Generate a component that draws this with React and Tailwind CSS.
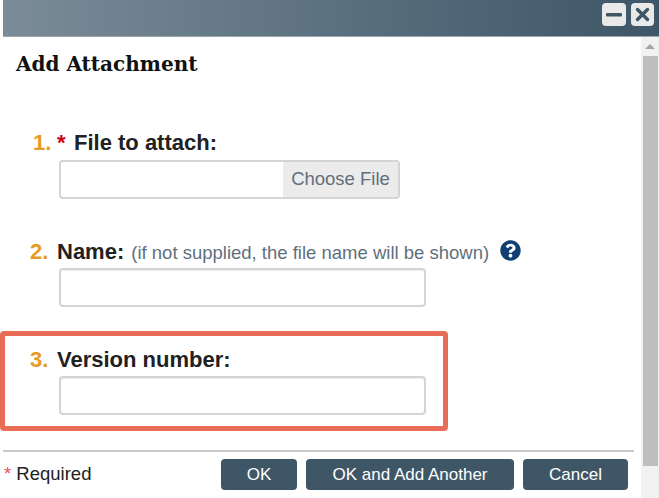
import { FaQuestionCircle } from "react-icons/fa";

function TextBox({ className }) {
  return <div className={"h-[39px] w-[367px] bg-white border-2 border-[#d4d4d4] rounded-[4px] shadow-[inset_0_1px_1px_rgba(0,0,0,0.08)] " + className} />;
}

function ActionButton({ className, children }) {
  return <button className={"h-[31px] bg-[#3f5667] rounded-[4px] text-white text-[17px] " + className}>{children}</button>;
}

export default function App() {
  return (
    <div className="w-[659px] h-[498px] overflow-hidden bg-white flex flex-col font-['Liberation_Sans',sans-serif] text-[#212121]">
      <div className="h-[37px] ml-[3px] shrink-0 flex justify-end items-start gap-[5px] pt-[3px] pr-[5px] bg-gradient-to-r from-[#7b8c98] to-[#3e5667] border-b border-[#9aa7b0]">
        <button className="w-[24px] h-[23px] bg-[#e9e9e9] rounded-[4px] flex items-center justify-center">
          <svg width="18" height="6" viewBox="0 0 18 6"><rect x="1" y="1" width="16" height="3.5" rx="1" fill="#3f5667" /></svg>
        </button>
        <button className="w-[23px] h-[23px] bg-[#e9e9e9] rounded-[4px] flex items-center justify-center">
          <svg width="15" height="15" viewBox="0 0 15 15"><path d="M2.5 2.5 12.5 12.5M12.5 2.5 2.5 12.5" stroke="#3f5667" strokeWidth="3.4" strokeLinecap="round" /></svg>
        </button>
      </div>

      <div className="flex-1 flex min-h-0">
        <div className="flex-1 min-w-0 flex flex-col">
          <h1 className="ml-[16px] mt-[12px] h-[30px] font-['DejaVu_Serif',serif] font-bold text-[20px] leading-[30px] text-[#111]">Add Attachment</h1>

          <div className="mt-[47px]">
            <div className="flex items-baseline h-[24px] text-[22px] font-bold">
              <span className="ml-[33px] w-[24px] text-[#e79a22]">1.</span>
              <span className="w-[17px] text-[#c8000f]">*</span>
              <span>File to attach:</span>
            </div>
            <div className="mt-[10px] ml-[59px] w-[341px] h-[39px] flex border-2 border-[#d4d4d4] rounded-[4px]">
              <div className="flex-1" />
              <div className="w-[115px] bg-[#ebebeb] text-[#5f6f7c] text-[18.5px] leading-[33px] text-center">Choose File</div>
            </div>
          </div>

          <div className="mt-[36px]">
            <div className="flex items-baseline h-[24px] text-[22px] font-bold">
              <span className="ml-[30px] w-[27px] text-[#e79a22]">2.</span>
              <span className="mr-[7px]">Name:</span>
              <span className="text-[18.5px] font-normal text-[#5f6f7c]">(if not supplied, the file name will be shown)</span>
              <FaQuestionCircle className="ml-[11px] mt-[6px] self-center" size={21} color="#123f73" />
            </div>
            <TextBox className="mt-[9px] ml-[59px]" />
          </div>

          <div className="mt-[24px] w-[448px] h-[100px] border-[5px] border-[#e96d56] rounded-[4px] pt-[7px]">
            <div className="flex items-baseline h-[24px] text-[22px] font-bold">
              <span className="ml-[25px] w-[27px] text-[#e79a22]">3.</span>
              <span>Version number:</span>
            </div>
            <TextBox className="mt-[9px] ml-[54px]" />
          </div>

          <div className="mt-[19px] ml-[3px] mr-[7px] border-t-2 border-[#c8c8c8] pt-[7px] flex items-start">
            <div className="flex-1 text-[18.5px] leading-[30px] ml-[1px]"><span className="text-[#e8505b]">*</span> Required</div>
            <ActionButton className="w-[76px]">OK</ActionButton>
            <ActionButton className="ml-[9px] w-[208px]">OK and Add Another</ActionButton>
            <ActionButton className="ml-[9px] mr-[6px] w-[105px]">Cancel</ActionButton>
          </div>
        </div>

        <div className="w-[18px] shrink-0 bg-[#f1f1f1] flex flex-col items-center">
          <svg className="mt-[7px] shrink-0" width="10" height="5" viewBox="0 0 10 5"><path d="M0 5 5 0 10 5Z" fill="#a3a3a3" /></svg>
          <div className="mt-[7px] ml-[1px] w-[15px] h-[410px] bg-[#bebebe]" />
        </div>
      </div>
    </div>
  );
}
